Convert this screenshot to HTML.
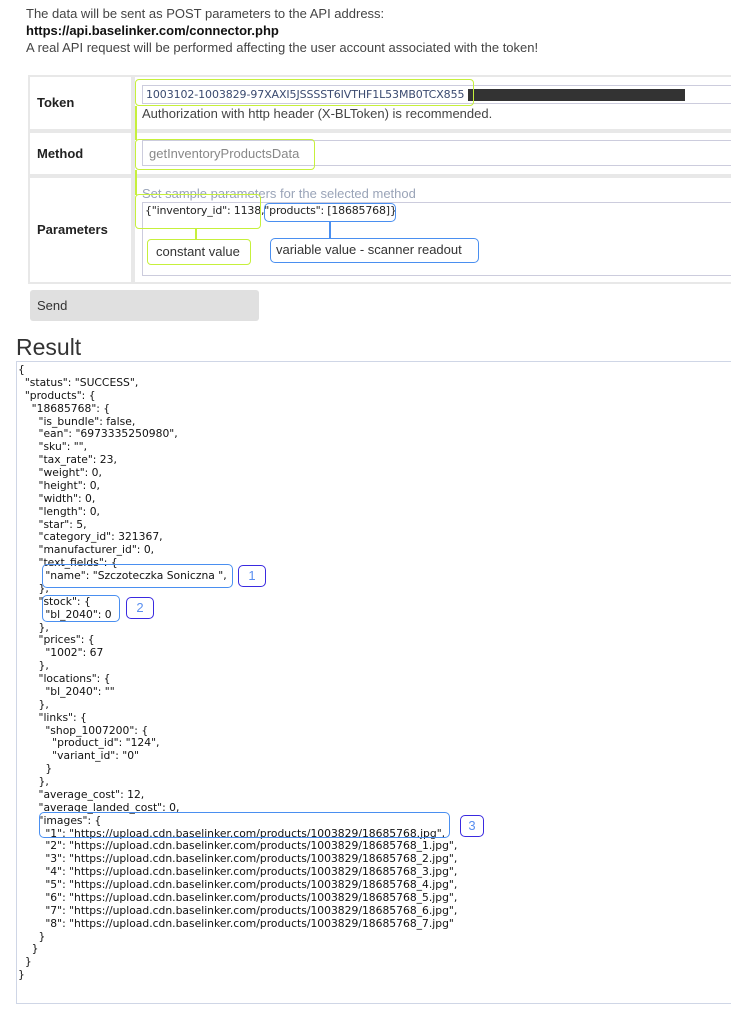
<!DOCTYPE html>
<html><head><meta charset="utf-8"><style>
body{margin:0;width:731px;height:1024px;background:#fff;position:relative;overflow:hidden;font-family:"Liberation Sans",sans-serif;}
.a{position:absolute;}
.top{left:26px;font-size:13px;color:#444;}
.cell{position:absolute;border:2px solid #e8e8e8;box-sizing:border-box;}
.lbl{position:absolute;left:37px;font-size:13px;font-weight:bold;color:#222;}
.inp{position:absolute;border:1px solid #ccd;box-sizing:border-box;background:#fff;}
.g{position:absolute;border:1.5px solid #c6f03c;border-radius:4px;box-sizing:border-box;}
.b{position:absolute;border:1.5px solid #4a8ff0;border-radius:5px;box-sizing:border-box;}
.n{position:absolute;border:1.5px solid #3a2ae0;border-radius:5px;box-sizing:border-box;color:#5a8ff0;font-size:13px;text-align:center;line-height:19px;width:28px;height:22px;}
pre{margin:0;font-family:"DejaVu Sans",sans-serif;font-size:10.75px;line-height:12.87px;color:#111;}
</style></head><body>
<div class="a top" style="top:6px">The data will be sent as POST parameters to the API address:</div>
<div class="a top" style="top:23px;font-weight:bold;color:#111">https://api.baselinker.com/connector.php</div>
<div class="a top" style="top:40px">A real API request will be performed affecting the user account associated with the token!</div>

<div class="cell" style="left:28px;top:75px;width:105px;height:56px"></div>
<div class="cell" style="left:133px;top:75px;width:600px;height:56px"></div>
<div class="cell" style="left:28px;top:131px;width:105px;height:45px"></div>
<div class="cell" style="left:133px;top:131px;width:600px;height:45px"></div>
<div class="cell" style="left:28px;top:176px;width:105px;height:108px"></div>
<div class="cell" style="left:133px;top:176px;width:600px;height:108px"></div>
<div class="lbl" style="top:95px">Token</div>
<div class="lbl" style="top:146px">Method</div>
<div class="lbl" style="top:222px">Parameters</div>

<div class="inp" style="left:142px;top:85px;width:595px;height:19px"></div>
<div class="a" style="left:146px;top:88px;font-size:11px;color:#3a4a70;font-family:'DejaVu Sans',sans-serif;letter-spacing:-0.1px">1003102-1003829-97XAXI5JSSSST6IVTHF1L53MB0TCX855</div>
<div class="a" style="left:468px;top:89px;width:217px;height:12px;background:#333"></div>
<div class="a" style="left:142px;top:106px;font-size:13px;color:#444">Authorization with http header (X-BLToken) is recommended.</div>
<div class="inp" style="left:142px;top:140px;width:595px;height:26px"></div>
<div class="a" style="left:149px;top:146px;font-size:13px;color:#888">getInventoryProductsData</div>
<div class="a" style="left:142px;top:186px;font-size:13px;color:#9aa4b8">Set sample parameters for the selected method</div>
<div class="inp" style="left:142px;top:202px;width:595px;height:74px"></div>
<div class="a" style="left:145px;top:204px;font-size:11px;color:#222;font-family:'DejaVu Sans',sans-serif;letter-spacing:-0.2px">{"inventory_id": 1138,"products": [18685768]}</div>

<div class="g" style="left:135px;top:79px;width:339px;height:27px"></div>
<div class="a" style="left:135px;top:106px;width:2px;height:34px;background:#c6f03c"></div>
<div class="g" style="left:135px;top:139px;width:180px;height:31px"></div>
<div class="a" style="left:135px;top:170px;width:2px;height:25px;background:#c6f03c"></div>
<div class="g" style="left:135px;top:194px;width:126px;height:35px"></div>
<div class="a" style="left:195px;top:229px;width:2px;height:10px;background:#c6f03c"></div>
<div class="g" style="left:147px;top:239px;width:104px;height:26px"></div>
<div class="a" style="left:156px;top:244px;font-size:13px;color:#333">constant value</div>
<div class="b" style="left:264px;top:203px;width:132px;height:19px"></div>
<div class="a" style="left:329px;top:222px;width:2px;height:16px;background:#4a8ff0"></div>
<div class="b" style="left:270px;top:238px;width:209px;height:25px"></div>
<div class="a" style="left:276px;top:242px;font-size:13px;color:#333">variable value - scanner readout</div>

<div class="a" style="left:30px;top:290px;width:229px;height:31px;background:#e0e0e0;border-radius:3px"></div>
<div class="a" style="left:37px;top:298px;font-size:13px;color:#333">Send</div>
<div class="a" style="left:16px;top:334px;font-size:23px;color:#333">Result</div>
<div class="a" style="left:16px;top:361px;width:720px;height:643px;border:1px solid #cfd6e6;box-sizing:border-box;border-right:none"></div>

<pre class="a" style="left:18px;top:364px">{
  "status": "SUCCESS",
  "products": {
    "18685768": {
      "is_bundle": false,
      "ean": "6973335250980",
      "sku": "",
      "tax_rate": 23,
      "weight": 0,
      "height": 0,
      "width": 0,
      "length": 0,
      "star": 5,
      "category_id": 321367,
      "manufacturer_id": 0,
      "text_fields": {
        "name": "Szczoteczka Soniczna ",
      },
      "stock": {
        "bl_2040": 0
      },
      "prices": {
        "1002": 67
      },
      "locations": {
        "bl_2040": ""
      },
      "links": {
        "shop_1007200": {
          "product_id": "124",
          "variant_id": "0"
        }
      },
      "average_cost": 12,
      "average_landed_cost": 0,
      "images": {
        "1": "https://upload.cdn.baselinker.com/products/1003829/18685768.jpg",
        "2": "https://upload.cdn.baselinker.com/products/1003829/18685768_1.jpg",
        "3": "https://upload.cdn.baselinker.com/products/1003829/18685768_2.jpg",
        "4": "https://upload.cdn.baselinker.com/products/1003829/18685768_3.jpg",
        "5": "https://upload.cdn.baselinker.com/products/1003829/18685768_4.jpg",
        "6": "https://upload.cdn.baselinker.com/products/1003829/18685768_5.jpg",
        "7": "https://upload.cdn.baselinker.com/products/1003829/18685768_6.jpg",
        "8": "https://upload.cdn.baselinker.com/products/1003829/18685768_7.jpg"
      }
    }
  }
}</pre>

<div class="b" style="left:42px;top:564px;width:191px;height:24px"></div>
<div class="n" style="left:238px;top:565px">1</div>
<div class="b" style="left:42px;top:595px;width:78px;height:27px"></div>
<div class="n" style="left:126px;top:597px">2</div>
<div class="b" style="left:39px;top:812px;width:411px;height:26px"></div>
<div class="n" style="left:460px;top:815px;width:24px">3</div>
</body></html>
